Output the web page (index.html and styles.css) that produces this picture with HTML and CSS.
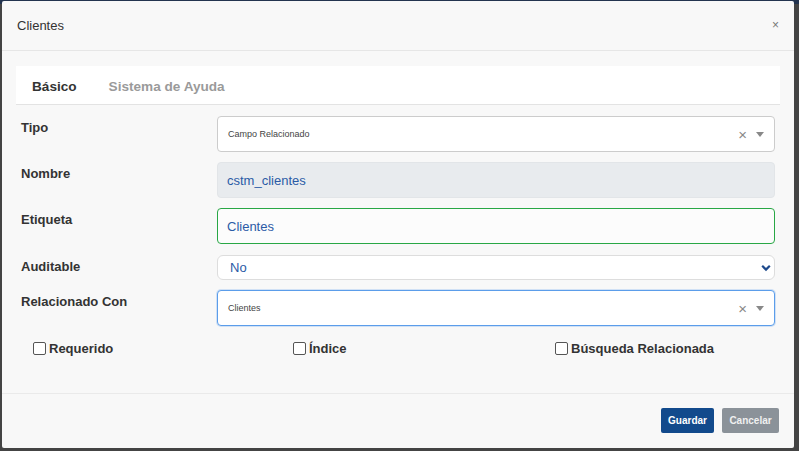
FILE: index.html
```html
<!DOCTYPE html>
<html lang="es">
<head>
<meta charset="utf-8">
<link rel="stylesheet" href="styles.css">
</head>
<body>
<div class="backdrop">
  <div class="modal">
    <div class="modal-header">
      <span class="modal-title">Clientes</span>
      <span class="close">×</span>
    </div>
    <div class="modal-body">
      <div class="tabs">
        <span class="tab active">Básico</span>
        <span class="tab">Sistema de Ayuda</span>
      </div>
      <div class="form">
        <div class="row">
          <label class="lbl">Tipo</label>
          <div class="select2">
            <span class="s2-text">Campo Relacionado</span>
            <span class="s2-clear">×</span>
            <span class="s2-arrow"></span>
          </div>
        </div>
        <div class="row">
          <label class="lbl">Nombre</label>
          <div class="input disabled">cstm_clientes</div>
        </div>
        <div class="row">
          <label class="lbl">Etiqueta</label>
          <div class="input valid">Clientes</div>
        </div>
        <div class="row row-sm">
          <label class="lbl">Auditable</label>
          <div class="native-select">
            <span>No</span>
            <svg width="10" height="8" viewBox="0 0 10 8"><path d="M1.2 1.8 L5 5.6 L8.8 1.8" fill="none" stroke="#1e4a8c" stroke-width="2.2"/></svg>
          </div>
        </div>
        <div class="row">
          <label class="lbl">Relacionado Con</label>
          <div class="select2 focus">
            <span class="s2-text">Clientes</span>
            <span class="s2-clear">×</span>
            <span class="s2-arrow"></span>
          </div>
        </div>
        <div class="checks">
          <label class="chk"><span class="box"></span>Requerido</label>
          <label class="chk"><span class="box"></span>Índice</label>
          <label class="chk"><span class="box"></span>Búsqueda Relacionada</label>
        </div>
      </div>
    </div>
    <div class="modal-footer">
      <button class="btn primary">Guardar</button>
      <button class="btn secondary">Cancelar</button>
    </div>
  </div>
</div>
</body>
</html>
```
FILE: styles.css
```css
* { box-sizing: border-box; }
html, body { margin: 0; padding: 0; }
body {
  width: 799px;
  height: 451px;
  overflow: hidden;
  background: #3e4246;
  font-family: "Liberation Sans", Arial, sans-serif;
  color: #333;
}
.backdrop {
  padding: 1px 5px 3px 2px;
  height: 451px;
  background: linear-gradient(#23344f 0, #23344f 4px, #444 4px);
}
.modal {
  background: #f8f8f8;
  height: 447px;
  display: flex;
  flex-direction: column;
  border-radius: 2px;
}
.modal-header {
  height: 50px;
  flex: none;
  border-bottom: 1px solid #e6e6e6;
  display: flex;
  align-items: center;
  justify-content: space-between;
  padding: 0 15px 1px 15px;
}
.modal-title { font-size: 13px; color: #333; }
.close { font-size: 12px; color: #777; }
.modal-body {
  padding: 15px 14px 0 14px;
  flex: 1;
}
.tabs {
  background: #fff;
  height: 39px;
  border-bottom: 1px solid #e3e3e3;
  display: flex;
  align-items: center;
  padding-left: 16px;
  padding-top: 2px;
  gap: 32px;
}
.tab { font-size: 13.6px; font-weight: bold; color: #9a9a9a; }
.tab.active { color: #333; }
.form {
  padding: 11px 5px 0 5px;
  display: flex;
  flex-direction: column;
}
.row {
  display: flex;
  margin-bottom: 10px;
  height: 36px;
}
.row-sm { height: 25px; margin-top: 1px; margin-bottom: 10px; }
.lbl {
  width: 196px;
  font-size: 13px;
  font-weight: bold;
  color: #333;
  padding-top: 4px;
}
.row-sm .lbl { padding-top: 4px; }
.select2, .input, .native-select {
  flex: 1;
  border: 1px solid #ccc;
  border-radius: 4px;
  background: #fff;
  display: flex;
  align-items: center;
}
.select2 { padding: 0 10px 0 10px; }
.select2.focus { border-color: #5b9dea; box-shadow: 0 0 0 1px rgba(91,157,234,0.25); }
.s2-text { flex: 1; font-size: 9px; color: #444; }
.s2-clear { font-size: 15px; color: #888; margin-right: 9px; line-height: 1; }
.s2-arrow {
  width: 0; height: 0;
  border-left: 4.5px solid transparent;
  border-right: 4.5px solid transparent;
  border-top: 5px solid #888;
}
.input { padding: 0 9px; font-size: 13px; color: #2b5ba6; }
.input.disabled { background: #e8ebee; border-color: #e2e5e8; }
.input.valid { border-color: #28a745; background: #fcfcfc; }
.native-select {
  padding: 0 3px 0 12px;
  justify-content: space-between;
  font-size: 13px;
  color: #2b5ba6;
  border-color: #ddd;
  border-radius: 6px;
}
.checks {
  display: grid;
  grid-template-columns: 260px 262px 1fr;
  padding-left: 12px;
  margin-top: 5px;
}
.chk {
  display: flex;
  align-items: center;
  font-size: 13px;
  font-weight: bold;
  color: #333;
}
.box {
  width: 13px; height: 13px;
  border: 1px solid #555;
  border-radius: 2px;
  margin-right: 3px;
  background: #fff;
}
.modal-footer {
  border-top: 1px solid #eaeaea;
  height: 55px;
  flex: none;
  display: flex;
  align-items: center;
  justify-content: flex-end;
  padding: 0 15px 1px 0;
  gap: 8px;
}
.btn {
  font-family: "Liberation Sans", Arial, sans-serif;
  font-size: 10px;
  font-weight: bold;
  color: #fff;
  border: none;
  border-radius: 2px;
  height: 25px;
}
.btn.primary { background: #124a8c; width: 53px; }
.btn.secondary { background: #8b9299; width: 57px; color: #f0f0f0; }
```
